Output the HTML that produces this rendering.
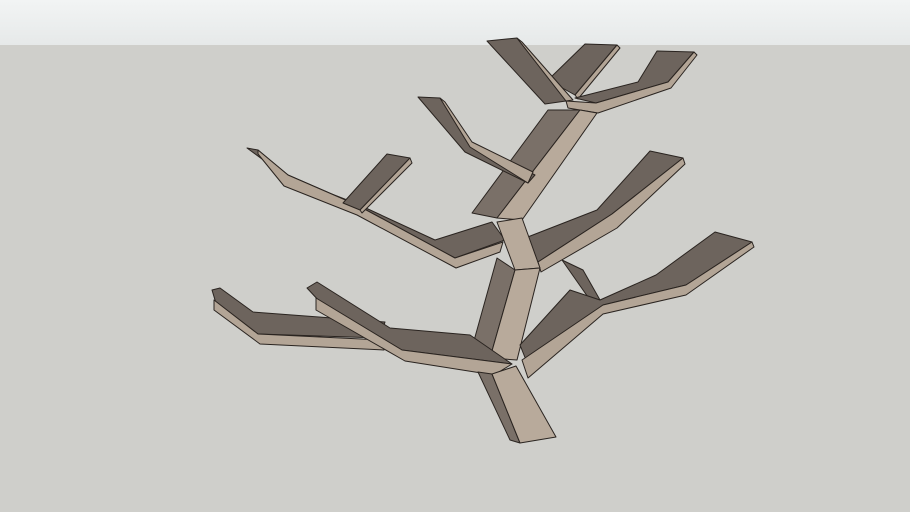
<!DOCTYPE html>
<html><head><style>
html,body{margin:0;padding:0;width:910px;height:512px;overflow:hidden;background:#cfcfcb}
</style></head><body>
<svg width="910" height="512" viewBox="0 0 910 512" xmlns="http://www.w3.org/2000/svg">
<defs><linearGradient id="sky" x1="0" y1="0" x2="0" y2="1"><stop offset="0" stop-color="#f2f4f4"/><stop offset="1" stop-color="#e6e9e9"/></linearGradient></defs>
<rect width="910" height="512" fill="#cfcfcb"/>
<rect width="910" height="45" fill="url(#sky)"/>
<g stroke="#2a2420" stroke-width="1" stroke-linejoin="round">
<polygon fill="#6d645d" points="548,80 585,44 617,45 575,95"/>
<polygon fill="#b3a596" points="617,45 620,48 578,99 575,95"/>
<polygon fill="#6d645d" points="487,41 517,38 566,101 545,104"/>
<polygon fill="#b3a596" points="517,38 522,42 573,100 566,101"/>
<polygon fill="#6d645d" points="575,98 638,82 657,51 694,52 668,82 596,103"/>
<polygon fill="#b3a596" points="566,101 596,103 668,82 694,52 697,55 671,88 598,113 568,108"/>
<polygon fill="#7a7068" points="472,213 548,110 580,110 497,218"/>
<polygon fill="#b8aa9b" points="580,110 597,113 522,220 497,218"/>
<polygon fill="#6d645d" points="418,97 440,98 470,142 535,175 528,183 465,152"/>
<polygon fill="#b3a596" points="440,98 445,102 472,142 533,172 528,183 470,147"/>
<polygon fill="#6d645d" points="247,148 285,176 355,203 435,240 492,222 505,240 455,258 357,205 288,175 258,150"/>
<polygon fill="#b3a596" points="258,150 288,175 357,205 455,258 503,242 500,252 456,268 357,215 284,186 258,154"/>
<polygon fill="#6d645d" points="343,203 387,154 410,158 360,210"/>
<polygon fill="#b3a596" points="410,158 412,163 362,213 360,210"/>
<polygon fill="#6d645d" points="520,240 597,210 650,151 683,158 612,214 538,262"/>
<polygon fill="#b3a596" points="538,262 612,214 683,158 685,164 617,228 541,272"/>
<polygon fill="#b8aa9b" points="497,222 522,218 540,268 515,270"/>
<polygon fill="#7a7068" points="470,355 497,258 515,270 490,358"/>
<polygon fill="#b8aa9b" points="515,270 540,268 517,360 490,358"/>
<polygon fill="#6d645d" points="562,260 583,270 600,300 590,300"/>
<polygon fill="#6d645d" points="520,345 570,290 600,300 656,275 715,232 752,242 686,285 603,305 528,365"/>
<polygon fill="#b3a596" points="522,360 603,305 686,285 752,242 754,247 686,295 603,314 528,378"/>
<polygon fill="#6d645d" points="212,290 220,288 253,312 385,322 380,338 258,334 218,310"/>
<polygon fill="#b3a596" points="214,300 258,334 383,340 384,350 260,344 214,310"/>
<polygon fill="#6d645d" points="307,288 317,282 390,328 470,335 512,364 402,350 320,302"/>
<polygon fill="#b3a596" points="316,298 402,350 512,364 494,375 405,361 316,310"/>
<polygon fill="#7a7068" points="478,372 492,374 520,443 510,440"/>
<polygon fill="#b8aa9b" points="492,374 516,366 556,437 520,443"/>
</g>
</svg>
</body></html>
